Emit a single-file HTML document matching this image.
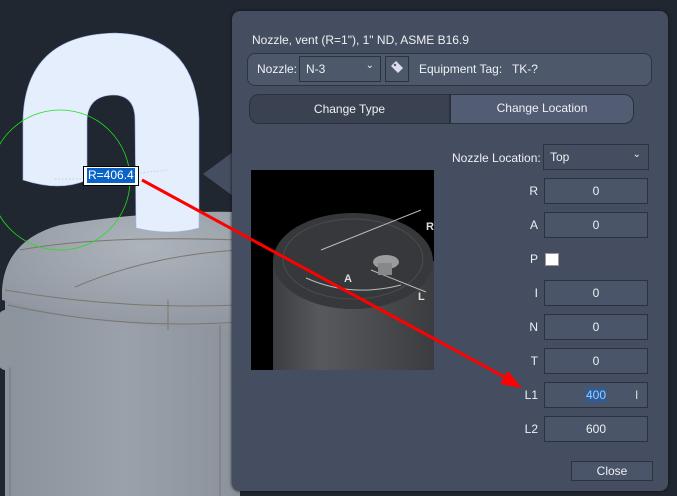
<!DOCTYPE html>
<html><head><style>
*{box-sizing:border-box;margin:0;padding:0}
body{width:677px;height:496px;overflow:hidden;background:#212730;font-family:"Liberation Sans",sans-serif;position:relative;font-size:12px;color:#eef0f4}
.abs{position:absolute}
.panel{position:absolute;left:232px;top:11px;width:436px;height:480px;background:#454e60;border-radius:8px;box-shadow:0 0 3px #111}
.inp{position:absolute;left:544px;width:104px;height:26px;background:#4b5569;border:1px solid #2c3240;text-align:center;line-height:24px;font-size:12px}
.lab{position:absolute;width:30px;text-align:right;left:508px;font-size:12px}
</style></head><body>
<svg class="abs" style="left:0;top:0" width="240" height="496">
<defs><linearGradient id="g" x1="0" x2="1"><stop offset="0" stop-color="#8a929c"/><stop offset=".5" stop-color="#9aa1aa"/><stop offset="1" stop-color="#8a919a"/></linearGradient>
<radialGradient id="d" cx=".6" cy=".3" r=".8"><stop offset="0" stop-color="#aeb4bc"/><stop offset="1" stop-color="#8d949d"/></radialGradient></defs>
<rect x="5" y="290" width="240" height="210" fill="url(#g)"/>
<path d="M2,290 Q5,240 60,225 Q150,210 240,212 L240,330 Q120,330 2,300Z" fill="url(#d)"/>
<path d="M5,290 Q120,310 240,305 M8,305 Q120,330 240,322" stroke="#7b7670" fill="none"/>
<path d="M20,250 Q100,235 240,240 M75,287 Q150,255 240,250 M168,300 L168,330 M220,325 L220,496 M10,320 L10,496" stroke="#7b7670" fill="none"/>
<ellipse cx="5" cy="340" rx="12" ry="30" fill="#8d949c"/>
<path d="M23,180 L23,120 Q25,35 115,33 Q195,35 199,118 L199,228 Q170,236 136,228 L135,120 Q135,95 113,95 Q88,96 87,120 L87,180 Q60,192 23,180Z" fill="#e4eefc" stroke="#9bb3e6" stroke-width=".6"/>
<circle cx="60" cy="180" r="70" fill="none" stroke="#1ee01e" stroke-width=".8"/>
<path d="M55,179 H85 M140,173 L168,170" stroke="#ccc" stroke-dasharray="1.5,2"/>
</svg>
<div class="abs" style="left:83px;top:166px;width:56px;height:20px;background:#fff;border:1px solid #000"></div>
<div class="abs" style="left:87px;top:168px;height:15px;background:#0a64c8;color:#fff;font-size:12px;line-height:15px;padding:0 1px">R=406.4</div>
<div class="abs" style="left:203px;top:152px;width:0;height:0;border-top:22px solid transparent;border-bottom:22px solid transparent;border-right:30px solid #454e60"></div>
<div class="panel"></div>
<div class="abs" style="left:252px;top:33px;font-size:12px">Nozzle, vent (R=1"), 1" ND, ASME B16.9</div>
<div class="abs" style="left:247px;top:53px;width:405px;height:33px;background:#4d586b;border:1px solid #2e3442;border-radius:8px"></div>
<div class="abs" style="left:257px;top:62px">Nozzle:</div>
<div class="abs" style="left:299px;top:56px;width:82px;height:26px;border:1px solid #2c3240;padding:5px 6px">N-3<span style="position:absolute;right:6px;top:3px;font-size:10px">&#8964;</span></div>
<div class="abs" style="left:385px;top:56px;width:24px;height:26px;border:1px solid #2c3240"><svg width="22" height="24"><path d="M5,9 L10,4 L17,11 L12,16Z" fill="#dde"/><circle cx="9" cy="8" r="1.2" fill="#4d586b"/></svg></div>
<div class="abs" style="left:419px;top:62px">Equipment Tag:&nbsp;&nbsp; TK-?</div>
<div class="abs" style="left:249px;top:94px;width:201px;height:30px;background:#3a4252;border:1px solid #2a303c;border-radius:10px 0 0 10px;text-align:center;line-height:28px">Change Type</div>
<div class="abs" style="left:450px;top:94px;width:184px;height:30px;background:#525c72;border:1px solid #2a303c;border-radius:0 10px 10px 0;text-align:center;line-height:27px">Change Location</div>
<div class="abs" style="left:452px;top:151px">Nozzle Location:</div>
<div class="abs" style="left:543px;top:144px;width:106px;height:26px;border:1px solid #2c3240;padding:6px 6px;line-height:13px">Top<span style="position:absolute;right:7px;top:3px;font-size:10px">&#8964;</span></div>
<svg class="abs" style="left:251px;top:170px" width="183" height="200">
<defs><linearGradient id="c" x1="0" x2="1"><stop offset="0" stop-color="#3c3d40"/><stop offset=".3" stop-color="#58595c"/><stop offset="1" stop-color="#3a3c3f"/></linearGradient></defs>
<rect width="183" height="200" fill="#000"/>
<rect x="22" y="91" width="161" height="109" fill="url(#c)"/>
<ellipse cx="102" cy="91" rx="80" ry="48" fill="#36383b"/>
<ellipse cx="102" cy="89" rx="70" ry="40" fill="none" stroke="#4a4c50"/>
<path d="M70,80 L170,40 M205,75 M55,108 Q100,128 150,115 M120,100 L175,122" stroke="#bbb" fill="none"/>
<ellipse cx="135" cy="92" rx="13" ry="7" fill="#9a9c9f"/>
<rect x="127" y="93" width="14" height="12" fill="#888"/>
<text x="93" y="112" fill="#ddd" font-size="11" font-weight="bold">A</text>
<text x="175" y="60" fill="#ddd" font-size="11" font-weight="bold">R</text>
<text x="167" y="130" fill="#ddd" font-size="11" font-weight="bold">L</text>
</svg>
<div class="lab" style="top:184px">R</div><div class="inp" style="top:178px">0</div>
<div class="lab" style="top:218px">A</div><div class="inp" style="top:212px">0</div>
<div class="lab" style="top:252px">P</div><div class="abs" style="left:545px;top:253px;width:14px;height:13px;background:#fff;border:1px solid #999"></div>
<div class="lab" style="top:286px">I</div><div class="inp" style="top:280px">0</div>
<div class="lab" style="top:320px">N</div><div class="inp" style="top:314px">0</div>
<div class="lab" style="top:354px">T</div><div class="inp" style="top:348px">0</div>
<div class="lab" style="top:388px">L1</div><div class="inp" style="top:382px"><span style="background:#2d5d98;color:#9cc8ff">400</span><span style="position:absolute;left:90px;top:0;color:#ddd">I</span></div>
<div class="lab" style="top:422px">L2</div><div class="inp" style="top:416px">600</div>
<div class="abs" style="left:571px;top:461px;width:82px;height:20px;background:#4b5569;border:1px solid #2c3240;text-align:center;line-height:18px">Close</div>
<svg class="abs" style="left:0;top:0" width="677" height="496">
<path d="M142,180 L510,380" stroke="#f00" stroke-width="3"/>
<path d="M522,388 L500,384 L508,371Z" fill="#f00"/>
</svg>
</body></html>
